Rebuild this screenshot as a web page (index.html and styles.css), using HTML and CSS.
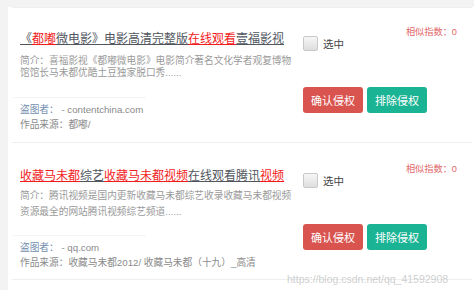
FILE: index.html
```html
<!DOCTYPE html>
<html lang="zh-CN">
<head>
<meta charset="utf-8">
<title>侵权列表</title>
<link rel="stylesheet" href="styles.css">
</head>
<body>
<div class="panel">
  <div class="items">
    <div class="item">
      <div class="main">
        <a class="title" href="#">《<span class="hl">都嘟</span>微电影》电影高清完整版<span class="hl">在线观看</span>壹福影视</a>
        <p class="desc">简介：喜福影视《都嘟微电影》电影简介著名文化学者观复博物<br>馆馆长马未都优酷土豆独家脱口秀......</p>
        <div class="rule"></div>
        <p class="meta"><span class="label">盗图者：</span> - contentchina.com</p>
        <p class="meta">作品来源：都嘟/</p>
      </div>
      <div class="side">
        <div class="side-top">
          <label class="check"><span class="box"></span>选中</label>
          <span class="score">相似指数：0</span>
        </div>
        <div class="actions">
          <button class="btn btn-red">确认侵权</button>
          <button class="btn btn-green">排除侵权</button>
        </div>
      </div>
    </div>
    <div class="item item-loose">
      <div class="main">
        <a class="title" href="#"><span class="hl">收藏马未都</span>综艺<span class="hl">收藏马未都视频</span>在线观看腾讯<span class="hl">视频</span></a>
        <p class="desc">简介：腾讯视频是国内更新收藏马未都综艺收录收藏马未都视频<br>资源最全的网站腾讯视频综艺频道......</p>
        <div class="rule"></div>
        <p class="meta"><span class="label">盗图者：</span> - qq.com</p>
        <p class="meta">作品来源：收藏马未都2012/ 收藏马未都（十九）_高清</p>
      </div>
      <div class="side">
        <div class="side-top">
          <label class="check"><span class="box"></span>选中</label>
          <span class="score">相似指数：0</span>
        </div>
        <div class="actions">
          <button class="btn btn-red">确认侵权</button>
          <button class="btn btn-green">排除侵权</button>
        </div>
      </div>
    </div>
  </div>
</div>
<div class="watermark">https://blog.csdn.net/qq_41592908</div>
</body>
</html>
```

FILE: styles.css
```css
html, body {
  margin: 0;
  padding: 0;
}
body {
  width: 474px;
  height: 290px;
  overflow: hidden;
  background: #f3f3f4;
  font-family: "Liberation Sans", "Noto Sans CJK SC", sans-serif;
  position: relative;
}
.panel {
  margin: 7px 0 0 8px;
  background: #fff;
  padding: 0 2px 0 4px;
  height: 283px;
}
.items {
  border-top: 1px solid #eceef0;
}
.item {
  display: flex;
  height: 115px;
  padding: 19px 0 0 8px;
  border-bottom: 1px solid #eceef0;
}
.item-loose {
  padding-top: 21px;
}
.main {
  width: 283px;
  flex: none;
}
.title {
  display: block;
  margin-top: 4px;
  font-size: 12px;
  line-height: 16px;
  color: #51565e;
  text-decoration: underline;
  white-space: nowrap;
}
.hl {
  color: #f21c1c;
  text-decoration: underline;
}
.desc {
  margin: 8px 0 0;
  font-size: 9.7px;
  line-height: 12px;
  color: #9a9a9a;
  white-space: nowrap;
}
.item-loose .desc {
  margin-top: 4px;
  line-height: 16px;
}
.rule {
  margin: 18px 0 0 -7px;
  width: 133px;
  height: 1px;
  background: #f4f4f4;
}
.item-loose .rule {
  margin-top: 15px;
}
.meta {
  margin: 0;
  font-size: 9.7px;
  line-height: 15px;
  color: #8a8a8a;
  white-space: nowrap;
}
.rule + .meta {
  margin-top: 4px;
}
.label {
  color: #7590b0;
}
.side {
  flex: 1;
  padding-right: 15px;
}
.side-top {
  display: flex;
  justify-content: space-between;
  align-items: flex-start;
  height: 23px;
}
.score {
  font-size: 9.2px;
  line-height: 10px;
  color: #e06767;
  white-space: nowrap;
}
.check {
  display: flex;
  align-items: center;
  margin-top: 9px;
  font-size: 10.5px;
  line-height: 14px;
  color: #444;
}
.box {
  width: 13px;
  height: 13px;
  border: 1px solid #c9c9c9;
  border-radius: 2px;
  background: linear-gradient(#f6f6f6, #dedede);
  margin-right: 5px;
}
.actions {
  display: flex;
  gap: 4px;
  margin-top: 37px;
}
.btn {
  width: 60px;
  height: 26px;
  border: none;
  border-radius: 3px;
  color: #fff;
  font-family: "Liberation Sans", "Noto Sans CJK SC", sans-serif;
  font-size: 11px;
  padding: 0;
}
.btn-red {
  background: #d9534f;
}
.btn-green {
  background: #1ab394;
}
.watermark {
  position: absolute;
  left: 287px;
  top: 273px;
  font-size: 10.5px;
  color: rgba(190, 190, 190, 0.75);
  white-space: nowrap;
}
```
